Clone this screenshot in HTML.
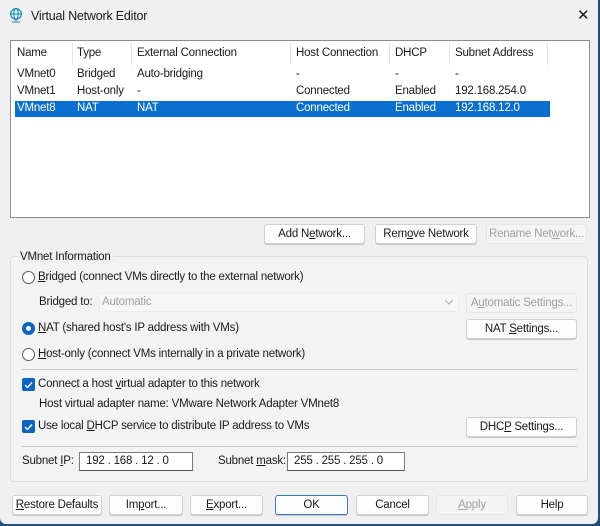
<!DOCTYPE html>
<html><head><meta charset="utf-8"><style>
*{box-sizing:border-box;margin:0;padding:0}
body{width:600px;height:526px;overflow:hidden;background:#1f4f7a;font-family:"Liberation Sans",sans-serif;font-size:11.5px;letter-spacing:-0.2px;color:#1a1a1a}
#win{position:absolute;left:0;top:0;width:598px;height:524px;background:#f0f0f0;border-radius:0 0 6px 6px}
.a{position:absolute;white-space:nowrap}
.btn{position:absolute;height:20px;background:#fdfdfd;border:1px solid #d0d0d0;border-radius:3px;text-align:center;line-height:18px;box-shadow:0 1px 0 #c8c8c8;white-space:nowrap;overflow:hidden}
.dis{color:#a0a0a0;background:#f5f5f5;border-color:#e6e6e6;box-shadow:none}
u{text-decoration:underline}
.list{position:absolute;left:10px;top:40px;width:580px;height:178px;background:#fff;border:1px solid #8c8c8c}
.sep{position:absolute;top:2px;width:1px;height:22px;background:#e5e5e5}
.sel{position:absolute;left:4px;top:60px;width:535px;height:16px;background:#0b6fd0}
.radio{position:absolute;width:13px;height:13px;border:1px solid #5a5a5a;border-radius:50%;background:#fff}
.radio.on{border:4px solid #0a64c2}
.chk{position:absolute;width:13px;height:13px;background:#0a64c2;border-radius:2px}
.field{position:absolute;height:19px;background:#fff;border:1px solid #7a7a7a;border-bottom-color:#555;line-height:17px;white-space:nowrap}
.hr{position:absolute;height:1px;background:#c9c9c9}
</style></head><body><div id="win">
<svg class="a" style="left:9px;top:8px" width="14" height="15" viewBox="0 0 14 15"><circle cx="7" cy="6" r="5.3" fill="none" stroke="#1a8fb0" stroke-width="1.3"/><ellipse cx="7" cy="6" rx="2.2" ry="5.3" fill="none" stroke="#1a8fb0" stroke-width="1.1"/><line x1="1.7" y1="6" x2="12.3" y2="6" stroke="#1a8fb0" stroke-width="1.1"/><line x1="7" y1="11" x2="7" y2="14" stroke="#1a8fb0"/><line x1="3" y1="14" x2="11" y2="14" stroke="#1a8fb0"/></svg>
<div class="a" style="left:31px;top:9px;font-size:12.5px">Virtual Network Editor</div>
<div class="a" style="left:577px;top:6px;font-size:15px">✕</div>

<div class="list">
<div class="sep" style="left:61px"></div><div class="sep" style="left:120px"></div><div class="sep" style="left:279px"></div><div class="sep" style="left:378px"></div><div class="sep" style="left:438px"></div><div class="sep" style="left:536px"></div>
<div class="sel"></div>
<div class="a" style="left:6px;top:6px">Name</div><div class="a" style="left:66px;top:6px">Type</div><div class="a" style="left:126px;top:6px">External Connection</div><div class="a" style="left:285px;top:6px">Host Connection</div><div class="a" style="left:384px;top:6px">DHCP</div><div class="a" style="left:444px;top:6px">Subnet Address</div>
<div class="a" style="left:6px;top:27px">VMnet0</div><div class="a" style="left:66px;top:27px">Bridged</div><div class="a" style="left:126px;top:27px">Auto-bridging</div><div class="a" style="left:285px;top:27px">-</div><div class="a" style="left:384px;top:27px">-</div><div class="a" style="left:444px;top:27px">-</div>
<div class="a" style="left:6px;top:44px">VMnet1</div><div class="a" style="left:66px;top:44px">Host-only</div><div class="a" style="left:126px;top:44px">-</div><div class="a" style="left:285px;top:44px">Connected</div><div class="a" style="left:384px;top:44px">Enabled</div><div class="a" style="left:444px;top:44px">192.168.254.0</div>
<div style="color:#fff"><div class="a" style="left:6px;top:61px">VMnet8</div><div class="a" style="left:66px;top:61px">NAT</div><div class="a" style="left:126px;top:61px">NAT</div><div class="a" style="left:285px;top:61px">Connected</div><div class="a" style="left:384px;top:61px">Enabled</div><div class="a" style="left:444px;top:61px">192.168.12.0</div></div>
</div>

<div class="btn" style="left:264px;top:224px;width:101px">Add N<u>e</u>twork...</div>
<div class="btn" style="left:375px;top:224px;width:102px">Rem<u>o</u>ve Network</div>
<div class="btn dis" style="left:486px;top:224px;width:101px">Rename Net<u>w</u>ork...</div>

<div class="a" style="left:10px;top:256px;width:578px;height:226px;border:1px solid #dcdcdc;border-radius:4px;background:#f3f3f3"></div>
<div class="a" style="left:18px;top:251px;background:#f0f0f0;padding:0 2px">VMnet Information</div>

<div class="radio" style="left:22px;top:271px"></div><div class="a" style="left:38px;top:271px"><u>B</u>ridged (connect VMs directly to the external network)</div>
<div class="a" style="left:39px;top:296px">Brid<u>g</u>ed to:</div>
<div class="a" style="left:99px;top:293px;width:360px;height:19px;background:#f7f7f7;border:1px solid #ececec"></div>
<div class="a" style="left:102px;top:296px;color:#a0a0a0">Automatic</div>
<svg class="a" style="left:444px;top:299px" width="10" height="6"><path d="M1 1L5 5L9 1" fill="none" stroke="#b0b0b0"/></svg>
<div class="btn dis" style="left:466px;top:293px;width:111px">A<u>u</u>tomatic Settings...</div>

<div class="radio on" style="left:22px;top:322px"></div><div class="a" style="left:38px;top:322px"><u>N</u>AT (shared host's IP address with VMs)</div>
<div class="btn" style="left:466px;top:319px;width:111px">NAT <u>S</u>ettings...</div>
<div class="radio" style="left:22px;top:348px"></div><div class="a" style="left:38px;top:348px"><u>H</u>ost-only (connect VMs internally in a private network)</div>
<div class="hr" style="left:22px;top:369px;width:555px"></div>

<div class="chk" style="left:22px;top:378px"></div><svg class="a" style="left:24px;top:381px" width="9" height="8"><path d="M1 4L3.5 6.5L8 1.5" fill="none" stroke="#fff" stroke-width="1.4"/></svg>
<div class="a" style="left:38px;top:378px">Connect a host <u>v</u>irtual adapter to this network</div>
<div class="a" style="left:39px;top:398px">Host virtual adapter name: VMware Network Adapter VMnet8</div>
<div class="chk" style="left:22px;top:420px"></div><svg class="a" style="left:24px;top:423px" width="9" height="8"><path d="M1 4L3.5 6.5L8 1.5" fill="none" stroke="#fff" stroke-width="1.4"/></svg>
<div class="a" style="left:38px;top:420px">Use local <u>D</u>HCP service to distribute IP address to VMs</div>
<div class="btn" style="left:466px;top:417px;width:111px">DHC<u>P</u> Settings...</div>
<div class="hr" style="left:22px;top:446px;width:555px"></div>

<div class="a" style="left:22px;top:455px">Subnet <u>I</u>P:</div>
<div class="field" style="left:79px;top:452px;width:114px;padding-left:6px">192 . 168 . 12 . 0</div>
<div class="a" style="left:218px;top:455px">Subnet <u>m</u>ask:</div>
<div class="field" style="left:287px;top:452px;width:118px;padding-left:6px">255 . 255 . 255 . 0</div>

<div class="btn" style="left:12px;top:495px;width:90px"><u>R</u>estore Defaults</div>
<div class="btn" style="left:109px;top:495px;width:74px">Im<u>p</u>ort...</div>
<div class="btn" style="left:190px;top:495px;width:73px"><u>E</u>xport...</div>
<div class="btn" style="left:275px;top:495px;width:73px;border-color:#3a7cc4">OK</div>
<div class="btn" style="left:356px;top:495px;width:73px">Cancel</div>
<div class="btn dis" style="left:436px;top:495px;width:72px"><u>A</u>pply</div>
<div class="btn" style="left:516px;top:495px;width:72px">Help</div>
</div></body></html>
